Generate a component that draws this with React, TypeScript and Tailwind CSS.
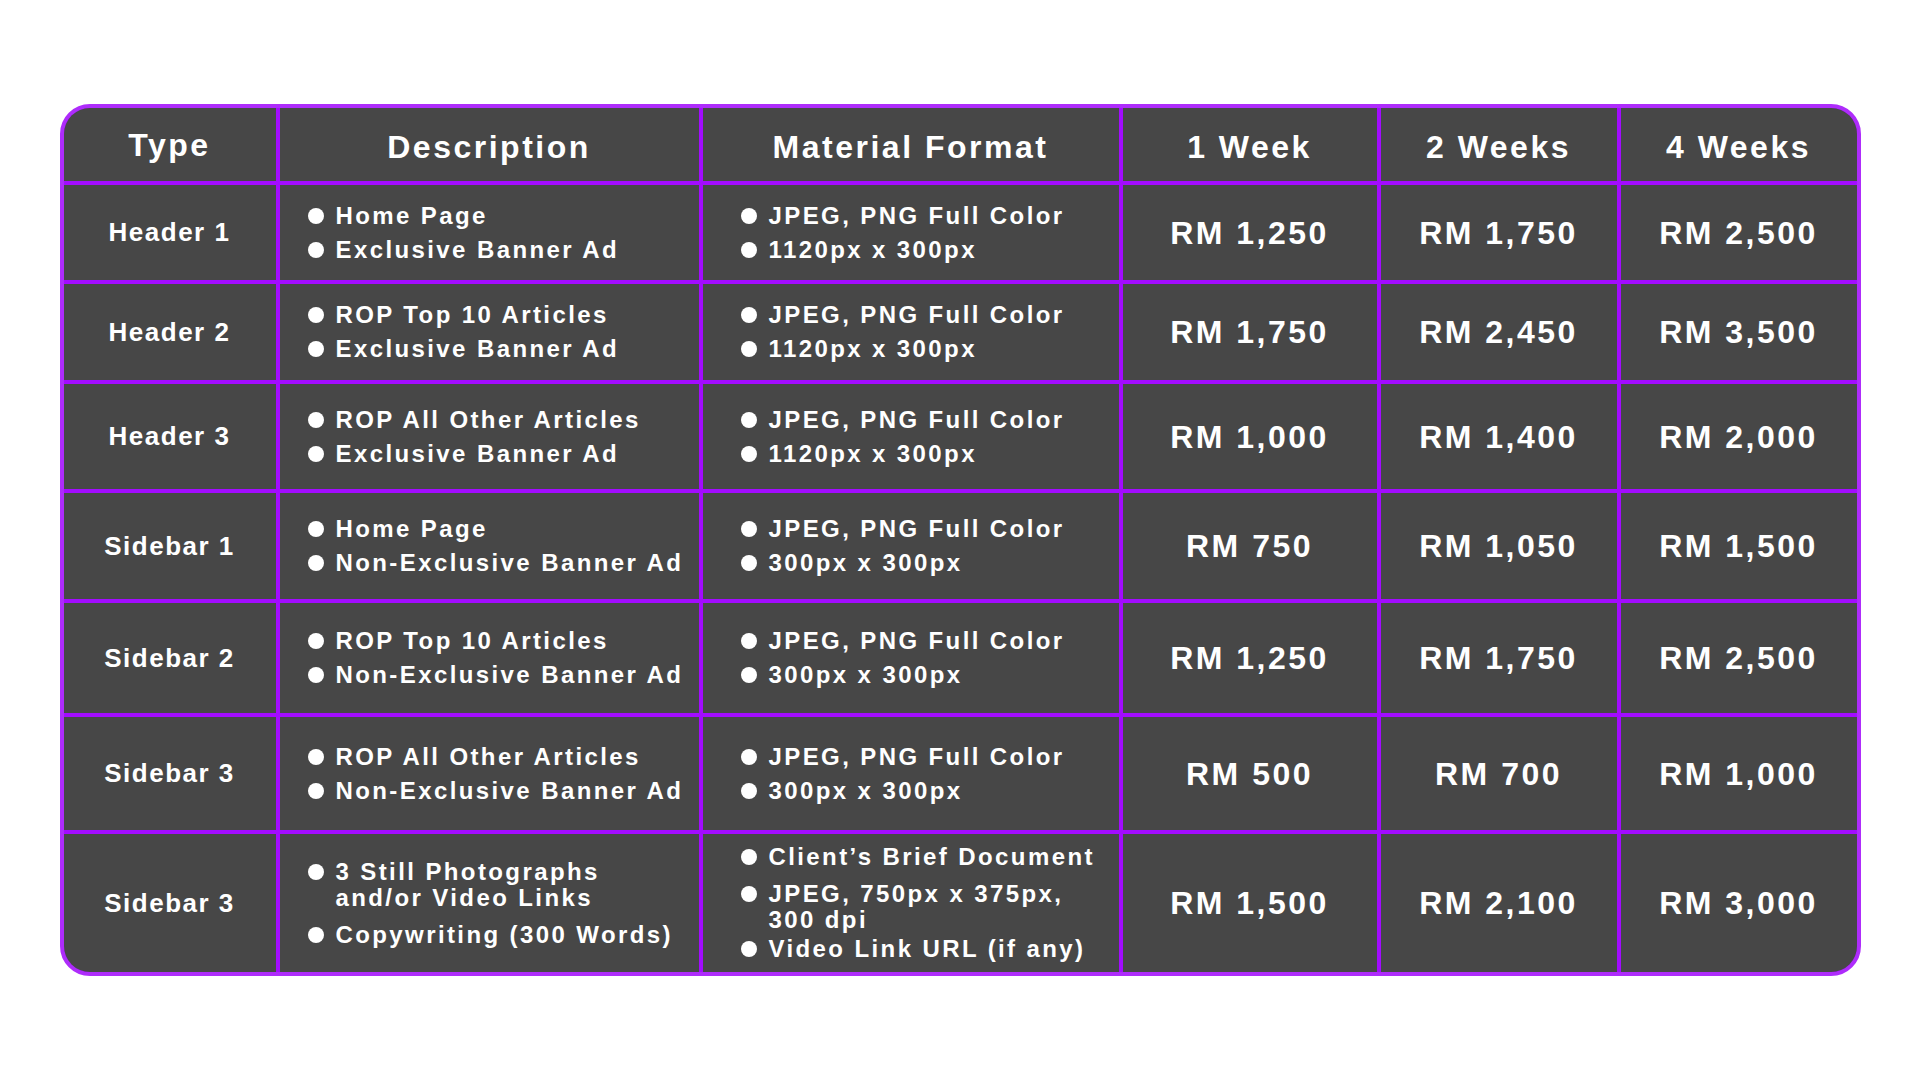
type Item = { text: string; gap?: string };

type Row = {
  type: string;
  desc: Item[];
  format: Item[];
  prices: string[];
  tall?: boolean;
};

const headerFormat: Item[] = [
  { text: "JPEG, PNG Full Color" },
  { text: "1120px x 300px" },
];

const sidebarFormat: Item[] = [
  { text: "JPEG, PNG Full Color" },
  { text: "300px x 300px" },
];

const rows: Row[] = [
  {
    type: "Header 1",
    desc: [{ text: "Home Page" }, { text: "Exclusive Banner Ad" }],
    format: headerFormat,
    prices: ["RM 1,250", "RM 1,750", "RM 2,500"],
  },
  {
    type: "Header 2",
    desc: [{ text: "ROP Top 10 Articles" }, { text: "Exclusive Banner Ad" }],
    format: headerFormat,
    prices: ["RM 1,750", "RM 2,450", "RM 3,500"],
  },
  {
    type: "Header 3",
    desc: [{ text: "ROP All Other Articles" }, { text: "Exclusive Banner Ad" }],
    format: headerFormat,
    prices: ["RM 1,000", "RM 1,400", "RM 2,000"],
  },
  {
    type: "Sidebar 1",
    desc: [{ text: "Home Page" }, { text: "Non-Exclusive Banner Ad" }],
    format: sidebarFormat,
    prices: ["RM 750", "RM 1,050", "RM 1,500"],
  },
  {
    type: "Sidebar 2",
    desc: [{ text: "ROP Top 10 Articles" }, { text: "Non-Exclusive Banner Ad" }],
    format: sidebarFormat,
    prices: ["RM 1,250", "RM 1,750", "RM 2,500"],
  },
  {
    type: "Sidebar 3",
    desc: [{ text: "ROP All Other Articles" }, { text: "Non-Exclusive Banner Ad" }],
    format: sidebarFormat,
    prices: ["RM 500", "RM 700", "RM 1,000"],
  },
  {
    type: "Sidebar 3",
    tall: true,
    desc: [
      { text: "3 Still Photographs\nand/or Video Links" },
      { text: "Copywriting (300 Words)", gap: "mt-[11px]" },
    ],
    format: [
      { text: "Client’s Brief Document" },
      { text: "JPEG, 750px x 375px,\n300 dpi", gap: "mt-[11px]" },
      { text: "Video Link URL (if any)", gap: "mt-[3px]" },
    ],
    prices: ["RM 1,500", "RM 2,100", "RM 3,000"],
  },
];

const headings = ["Type", "Description", "Material Format", "1 Week", "2 Weeks", "4 Weeks"];

function Bullets({ items, tall }: { items: Item[]; tall?: boolean }) {
  const line = tall ? "leading-[26px]" : "leading-[34px]";
  const dotBox = tall ? "h-[26px]" : "h-[34px]";
  return (
    <ul className="flex flex-col">
      {items.map((item) => (
        <li className={`flex items-start gap-[12px] ${item.gap ?? ""}`} key={item.text}>
          <span className={`flex shrink-0 items-center ${dotBox}`}>
            <span className="size-[16px] rounded-full bg-white" />
          </span>
          <span className={`whitespace-pre-line text-[24px] tracking-[2.4px] ${line}`}>
            {item.text}
          </span>
        </li>
      ))}
    </ul>
  );
}

export default function App() {
  return (
    <main
      className="flex min-h-screen items-center justify-center bg-white"
      style={{ fontFamily: '"Liberation Sans", Arial, sans-serif' }}
    >
      <div className="overflow-hidden rounded-[30px] border-4 border-[#ae2cfb] bg-[#a30cff] font-bold text-white">
        <div className="grid grid-cols-[212px_419px_416px_254px_236px_236px] grid-rows-[73px_95px_96px_105px_106px_110px_113px_138px] gap-[4px]">
          {headings.map((h, i) => (
            <div
              className={`flex items-center justify-center bg-[#474747] text-[32px] tracking-[2.5px] ${i === 0 ? "" : "pt-[5px]"}`}
              key={h}
            >
              {h}
            </div>
          ))}

          {rows.map((row, r) => [
            <div
              className="flex items-center justify-center bg-[#474747] text-[26px] tracking-[1.5px]"
              key={`t${r}`}
            >
              {row.type}
            </div>,
            <div className="flex items-center bg-[#474747] pl-[28px]" key={`d${r}`}>
              <Bullets items={row.desc} tall={row.tall} />
            </div>,
            <div className="flex items-center bg-[#474747] pl-[38px]" key={`f${r}`}>
              <Bullets items={row.format} tall={row.tall} />
            </div>,
            ...row.prices.map((p, i) => (
              <div
                className="flex items-center justify-center bg-[#474747] text-[32px] tracking-[2.5px]"
                key={`p${r}-${i}`}
              >
                {p}
              </div>
            )),
          ])}
        </div>
      </div>
    </main>
  );
}
